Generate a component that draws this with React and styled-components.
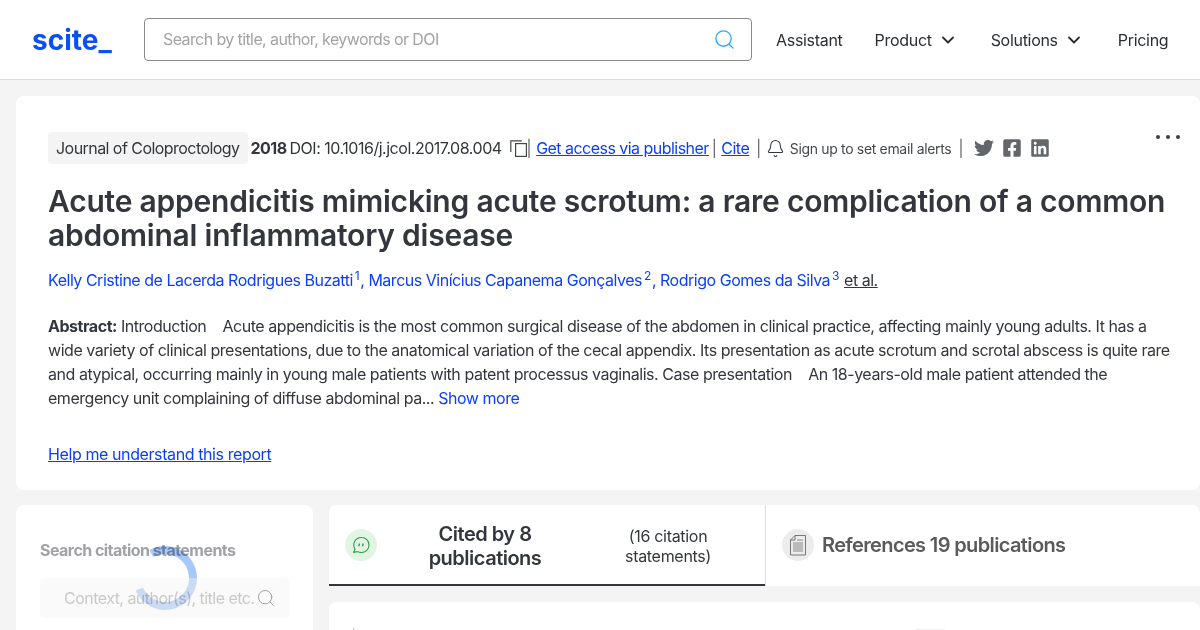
import React from 'react'
import styled, { createGlobalStyle } from 'styled-components'
import { FaTwitter, FaFacebookSquare, FaLinkedin } from 'react-icons/fa'
import { ChevronDown, Search, Bell } from 'lucide-react'

const Global = createGlobalStyle`
  html, body { margin: 0; padding: 0; height: 630px; overflow: hidden; background: #f4f4f4; }
  body { font-family: Inter, "Liberation Sans", sans-serif; color: #33373d; }
  * { box-sizing: border-box; }
`

const Header = styled.header`
  height: 80px;
  background: #fff;
  border-bottom: 1px solid #dcdcdc;
  display: flex;
  align-items: center;
  padding: 0 32px;
`

const Logo = styled.div`
  width: 112px;
  flex: none;
  font-size: 28px;
  font-weight: 700;
  color: #0b50f5;
`

const SearchBox = styled.div`
  width: 608px;
  height: 43px;
  flex: none;
  border: 1px solid #8a8a8a;
  border-radius: 4px;
  display: flex;
  align-items: center;
  justify-content: space-between;
  padding: 0 15px 2px 18px;
  font-size: 16px;
  letter-spacing: -0.6px;
  color: #a3a3a3;
  svg { color: #2aa8f5; margin-top: 2px; }
`

const Nav = styled.nav`
  display: flex;
  align-items: center;
  margin-left: 24px;
  font-size: 16px;
  letter-spacing: -0.3px;
  color: #2a2e33;
`

const NavItem = styled.span`
  display: flex;
  align-items: center;
  gap: 6px;
  margin-right: ${p => p.$gap}px;
  white-space: nowrap;
`

const Main = styled.main`
  height: 550px;
  overflow: hidden;
  padding: 16px 0 0 16px;
  display: flex;
  flex-direction: column;
  gap: 15px;
`

const Card = styled.section`
  position: relative;
  height: 394px;
  flex: none;
  background: #fff;
  border-radius: 8px;
  padding: 36px 32px 0;
`

const MetaRow = styled.div`
  display: flex;
  align-items: center;
  height: 32px;
  font-size: 16px;
  letter-spacing: -0.48px;
  white-space: nowrap;
`

const Journal = styled.span`
  background: #f4f4f4;
  border-radius: 4px;
  height: 32px;
  padding: 0 8px;
  display: flex;
  align-items: center;
  margin-right: 3px;
  letter-spacing: -0.55px;
`

const Year = styled.b`
  font-weight: 700;
  margin-right: 3px;
  letter-spacing: -0.55px;
`

const A = styled.a`
  color: #0b3ff5;
  text-decoration: underline;
  letter-spacing: -0.53px;
`

const Sep = styled.span`
  margin: 0 ${p => p.$r}px 0 ${p => p.$l}px;
  font-weight: 300;
`

const CopyIcon = styled.svg`
  flex: none;
  margin: 0 0 0 8px;
`

const Alerts = styled.span`
  font-size: 14px;
  letter-spacing: -0.33px;
  color: #44484e;
  margin-left: 5px;
`

const Socials = styled.span`
  display: flex;
  align-items: center;
  gap: 8px;
  color: #62676d;
  margin-left: 4px;
`

const Dots = styled.div`
  position: absolute;
  top: 39px;
  right: 20px;
  display: flex;
  gap: 6px;
  i {
    width: 4px;
    height: 4px;
    border-radius: 50%;
    background: #3a3e44;
  }
`

const Title = styled.h1`
  margin: 20px 0 0;
  font-size: 30px;
  line-height: 34px;
  font-weight: 600;
  letter-spacing: -0.22px;
  color: #33373d;
`

const Authors = styled.div`
  margin-top: 16px;
  font-size: 16px;
  line-height: 24px;
  letter-spacing: -0.48px;
  color: #0b3ff5;
  sup { font-size: 12px; line-height: 0; margin: 0 1px 0 2px; }
  u { color: #33373d; }
`

const Abstract = styled.p`
  margin: 22px -8px 0 0;
  font-size: 16px;
  line-height: 24px;
  letter-spacing: -0.46px;
  color: #33373d;
  b { font-weight: 700; }
  span { color: #0b3ff5; }
`

const Help = styled(A)`
  display: block;
  margin-top: 32px;
  font-size: 16px;
  line-height: 24px;
  letter-spacing: -0.4px;
`

const Row = styled.div`
  display: flex;
  flex: none;
  gap: 16px;
`

const Side = styled.aside`
  position: relative;
  width: 297px;
  height: 300px;
  flex: none;
  background: #fff;
  border-radius: 8px;
  padding: 36px 24px 0;
`

const SideTitle = styled.div`
  font-size: 16px;
  font-weight: 700;
  line-height: 18px;
  letter-spacing: -0.55px;
  color: #a0a2a5;
`

const SideInput = styled.div`
  margin-top: 19px;
  height: 40px;
  background: #fafafa;
  border-radius: 4px;
  display: flex;
  align-items: center;
  padding-left: 24px;
  gap: 2px;
  font-size: 16px;
  letter-spacing: -0.53px;
  color: #c9c9c9;
  white-space: nowrap;
  svg { color: #a3a3a3; flex: none; }
`

const Spinner = styled.svg`
  position: absolute;
  left: 117px;
  top: 41px;
  mix-blend-mode: multiply;
`

const Column = styled.div`
  flex: 1;
  display: flex;
  flex-direction: column;
  gap: 16px;
`

const Tabs = styled.div`
  height: 81px;
  display: flex;
  background: #fff;
  border-radius: 8px 8px 0 0;
  overflow: hidden;
`

const ActiveTab = styled.div`
  width: 436px;
  flex: none;
  border-bottom: 2px solid #33373d;
  display: flex;
  align-items: center;
  padding-left: 16px;
`

const OtherTab = styled.div`
  flex: 1;
  border-left: 1px solid #dcdcdc;
  display: flex;
  align-items: center;
  padding: 0 0 2px 16px;
  gap: 8px;
  font-size: 20px;
  font-weight: 600;
  letter-spacing: -0.63px;
  color: #5a5a5a;
`

const Circle = styled.span`
  width: 32px;
  height: 32px;
  border-radius: 50%;
  flex: none;
  display: flex;
  align-items: center;
  justify-content: center;
  background: ${p => p.$bg};
`

const CitedBy = styled.div`
  width: 172px;
  margin: 2px 0 0 22px;
  text-align: center;
  font-size: 20px;
  line-height: 24px;
  font-weight: 600;
  letter-spacing: -0.5px;
`

const Statements = styled.div`
  width: 120px;
  margin: 2px 0 0 37px;
  text-align: center;
  font-size: 16px;
  line-height: 20px;
  letter-spacing: -0.3px;
`

const Results = styled.div`
  height: 60px;
  background: #fff;
  border-radius: 8px;
  padding: 26px 0 0 24px;
  display: flex;
  align-items: flex-start;
`

const Tick = styled.i`
  width: 1px;
  height: 2px;
  background: #bdbdbd;
`

const ResultBar = styled.i`
  width: 30px;
  height: 2px;
  margin: 1px 0 0 561px;
  background: #efefef;
  border-radius: 2px 2px 0 0;
`

export default function App() {
  return (
    <>
      <Global />
      <Header>
        <Logo>scite_</Logo>
        <SearchBox>
          Search by title, author, keywords or DOI
          <Search size={23} strokeWidth={1.4} />
        </SearchBox>
        <Nav>
          <NavItem $gap={32}>Assistant</NavItem>
          <NavItem $gap={33}>Product <ChevronDown size={20} strokeWidth={2.2} /></NavItem>
          <NavItem $gap={34}>Solutions <ChevronDown size={20} strokeWidth={2.2} /></NavItem>
          <NavItem $gap={0}>Pricing</NavItem>
        </Nav>
      </Header>
      <Main>
        <Card>
          <MetaRow>
            <Journal>Journal of Coloproctology</Journal>
            <Year>2018</Year>
            DOI: 10.1016/j.jcol.2017.08.004
            <CopyIcon width="17" height="17" viewBox="0 0 17 17" fill="none" stroke="#44484e" strokeWidth="1.2">
              <path d="M.8 12V.8h11" />
              <rect x="5.6" y="3.6" width="10.8" height="12.8" />
            </CopyIcon>
            <Sep $l={0} $r={5}>|</Sep>
            <A>Get access via publisher</A>
            <Sep $l={3} $r={5}>|</Sep>
            <A>Cite</A>
            <Sep $l={7} $r={5}>|</Sep>
            <Bell size={19} strokeWidth={1.3} />
            <Alerts>Sign up to set email alerts</Alerts>
            <Sep $l={7} $r={7}>|</Sep>
            <Socials>
              <FaTwitter size={20} />
              <FaFacebookSquare size={20} />
              <FaLinkedin size={20} />
            </Socials>
          </MetaRow>
          <Dots><i /><i /><i /></Dots>
          <Title>Acute appendicitis mimicking acute scrotum: a rare complication of a common abdominal inflammatory disease</Title>
          <Authors>
            Kelly Cristine de Lacerda Rodrigues Buzatti<sup>1</sup>, Marcus Vinícius Capanema Gonçalves<sup>2</sup>, Rodrigo Gomes da Silva<sup>3</sup> <u>et al.</u>
          </Authors>
          <Abstract>
            <b>Abstract:</b> Introduction &nbsp;&nbsp;&nbsp;Acute appendicitis is the most common surgical disease of the abdomen in clinical practice, affecting mainly young adults. It has a wide variety of clinical presentations, due to the anatomical variation of the cecal appendix. Its presentation as acute scrotum and scrotal abscess is quite rare and atypical, occurring mainly in young male patients with patent processus vaginalis. Case presentation &nbsp;&nbsp;&nbsp;An 18-years-old male patient attended the emergency unit complaining of diffuse abdominal pa... <span>Show more</span>
          </Abstract>
          <Help>Help me understand this report</Help>
        </Card>
        <Row>
          <Side>
            <SideTitle>Search citation statements</SideTitle>
            <SideInput>
              Context, author(s), title etc.
              <Search size={20} strokeWidth={1.2} />
            </SideInput>
            <Spinner width="64" height="64" viewBox="0 0 64 64" fill="none" strokeWidth="8">
              <path d="M18.3 7.6A28 28 0 0 1 60 32" stroke="#a6c8fa" />
              <path d="M60 32A28 28 0 0 1 6.3 43" stroke="#cfe0fb" />
            </Spinner>
          </Side>
          <Column>
            <Tabs>
              <ActiveTab>
                <Circle $bg="#e1f5e3">
                  <svg width="20" height="20" viewBox="0 0 20 20" fill="none" stroke="#2f9e44" strokeWidth="1.1">
                    <path d="M10.5 2.5a7.5 7.5 0 0 1 0 15c-1.500 0-3-.3-4-.9l-3.800.7 1.300-3.200a7.500 7.500 0 0 1 6.500-11.600z" />
                    <path d="M8.300 8.500v1.500l-.8 1.200M12 8.500v1.500l-.8 1.200" strokeWidth="1.400" />
                  </svg>
                </Circle>
                <CitedBy>Cited by 8 publications</CitedBy>
                <Statements>(16 citation statements)</Statements>
              </ActiveTab>
              <OtherTab>
                <Circle $bg="#ececec">
                  <svg width="18" height="22" viewBox="0 0 18 22" fill="none" stroke="#5a5a5a" strokeWidth="0.8">
                    <path d="M6 1.500h10.500v19.500h-15V6z" />
                    <path d="M6 1.500V6H1.500" />
                    <path d="M8 6h6M4 9h10M4 11h10M4 13h10M4 15h10M4 17h10" stroke="#8a8a8a" strokeWidth="1" />
                  </svg>
                </Circle>
                References 19 publications
              </OtherTab>
            </Tabs>
            <Results><Tick /><ResultBar /></Results>
          </Column>
        </Row>
      </Main>
    </>
  )
}
